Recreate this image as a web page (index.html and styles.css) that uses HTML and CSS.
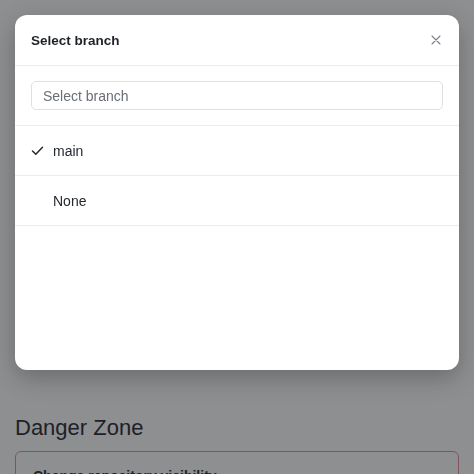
FILE: index.html
```html
<!DOCTYPE html>
<html>
<head>
<meta charset="utf-8">
<link rel="stylesheet" href="styles.css">
</head>
<body>
<main class="page">
  <div class="page-spacer"></div>
  <h2 class="danger-title">Danger Zone</h2>
  <section class="danger-box">
    <div class="danger-row">
      <strong class="danger-label">Change repository visibility</strong>
    </div>
  </section>
</main>

<div class="overlay">
  <div class="modal">
    <header class="modal-header">
      <h1 class="modal-title">Select branch</h1>
      <button class="close-btn" aria-label="Close">
        <svg width="10" height="10" viewBox="0 0 10 10"><path d="M1 1 L9 9 M9 1 L1 9" stroke="#7a8088" stroke-width="1.1" fill="none" stroke-linecap="round"/></svg>
      </button>
    </header>
    <div class="filter">
      <input class="filter-input" type="text" placeholder="Select branch">
    </div>
    <ul class="branch-list">
      <li class="branch-item">
        <span class="check">
          <svg width="13" height="13" viewBox="0 0 13 13"><path d="M1.5 7 L4.8 10.2 L11.5 3.2" stroke="#24292f" stroke-width="1.5" fill="none" stroke-linecap="round" stroke-linejoin="round"/></svg>
        </span>
        <span class="branch-name">main</span>
      </li>
      <li class="branch-item">
        <span class="check"></span>
        <span class="branch-name">None</span>
      </li>
    </ul>
  </div>
</div>
</body>
</html>
```

FILE: styles.css
```css
* { box-sizing: border-box; }
html, body {
  margin: 0;
  padding: 0;
  height: 100%;
  overflow: hidden;
  background: #ffffff;
  font-family: "Liberation Sans", Arial, sans-serif;
  color: #24292f;
}
.page {
  padding: 0 15px;
}
.page-spacer {
  height: 413px;
}
.danger-title {
  margin: 0;
  font-weight: 400;
  font-size: 22px;
  line-height: 30px;
  color: #1f2328;
}
.danger-box {
  margin-top: 8px;
  border: 1px solid #e8868c;
  border-radius: 6px;
}
.danger-row {
  padding: 15px 17px;
}
.danger-label {
  font-size: 14px;
  font-weight: 700;
}
.overlay {
  position: fixed;
  inset: 0;
  background: rgba(27, 31, 36, 0.5);
  padding: 15px;
}
.modal {
  width: 444px;
  height: 355px;
  background: #ffffff;
  border-radius: 12px;
  box-shadow: 0 8px 24px rgba(0, 0, 0, 0.25);
  overflow: hidden;
}
.modal-header {
  height: 51px;
  display: flex;
  align-items: center;
  justify-content: space-between;
  padding: 0 16px;
  border-bottom: 1px solid #ebedf0;
}
.modal-title {
  margin: 0;
  font-size: 13.5px;
  font-weight: 700;
  color: #1f2328;
}
.close-btn {
  border: 0;
  background: none;
  padding: 0;
  width: 10px;
  height: 10px;
  display: flex;
  margin-right: 2px;
}
.filter {
  padding: 15px 16px;
  border-bottom: 1px solid #ebedf0;
}
.filter-input {
  display: block;
  width: 100%;
  height: 29px;
  border: 1px solid #dde0e4;
  border-radius: 5px;
  padding: 0 11px;
  font-family: inherit;
  font-size: 14px;
  color: #24292f;
  outline: none;
}
.filter-input::placeholder {
  color: #6a6f76;
}
.branch-list {
  list-style: none;
  margin: 0;
  padding: 0;
}
.branch-item {
  height: 50px;
  display: flex;
  align-items: center;
  gap: 8px;
  padding-left: 16px;
  border-bottom: 1px solid #ebedf0;
  font-size: 14px;
  color: #24292f;
}
.check {
  width: 14px;
  height: 13px;
  display: flex;
}
```
